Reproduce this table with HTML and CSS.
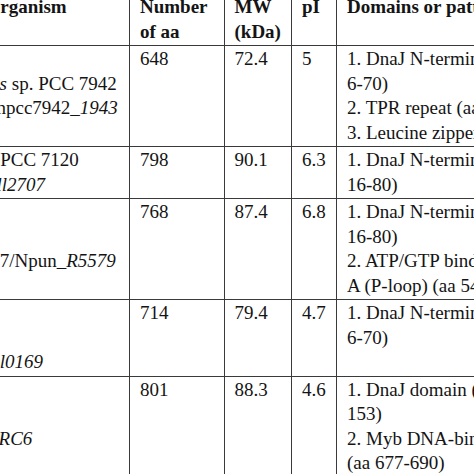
FILE: index.html
```html
<!DOCTYPE html>
<html lang="en">
<head>
<meta charset="utf-8">
<title>DnaJ-like proteins</title>
<link rel="stylesheet" href="styles.css">
</head>
<body>
<div class="frame">
<table class="tbl">
  <colgroup>
    <col class="c-org">
    <col class="c-num">
    <col class="c-mw">
    <col class="c-pi">
    <col class="c-dom">
  </colgroup>
  <thead>
    <tr>
      <th>Gene locus/Organism</th>
      <th>Number<br>of aa</th>
      <th>MW<br>(kDa)</th>
      <th>pI</th>
      <th>Domains or patterns</th>
    </tr>
  </thead>
  <tbody>
    <tr>
      <td class="org"><i>Synechococcus</i> sp. PCC 7942<br>Locus tag: Synpcc7942_<i>1943</i></td>
      <td>648</td>
      <td>72.4</td>
      <td>5</td>
      <td>1. DnaJ N-terminal domain (aa<br>6-70)<br>2. TPR repeat (aa 205-238)<br>3. Leucine zipper (aa 402-423)</td>
    </tr>
    <tr>
      <td class="org"><i>Anabaena</i> sp. PCC 7120<br>Gene locus: <i>all2707</i></td>
      <td>798</td>
      <td>90.1</td>
      <td>6.3</td>
      <td>1. DnaJ N-terminal domain (aa<br>16-80)</td>
    </tr>
    <tr>
      <td class="org"><i>Nostoc</i><br>Locus tag: Np7/Npun_<i>R5579</i></td>
      <td>768</td>
      <td>87.4</td>
      <td>6.8</td>
      <td>1. DnaJ N-terminal domain (aa<br>16-80)<br>2. ATP/GTP binding site motif<br>A (P-loop) (aa 540-547)</td>
    </tr>
    <tr>
      <td class="org"><i>Synechocystis</i><br>sp. PCC 6803<br>Gene locus: <i>sll0169</i></td>
      <td>714</td>
      <td>79.4</td>
      <td>4.7</td>
      <td>1. DnaJ N-terminal domain (aa<br>6-70)</td>
    </tr>
    <tr>
      <td class="org"><i>Arabidopsis</i><br>Gene locus: <i>ARC6</i></td>
      <td>801</td>
      <td>88.3</td>
      <td>4.6</td>
      <td>1. DnaJ domain (aa 89-<br>153)<br>2. Myb DNA-binding domain<br>(aa 677-690)</td>
    </tr>
  </tbody>
</table>
</div>
</body>
</html>
```

FILE: styles.css
```css
html, body {
  margin: 0;
  padding: 0;
  background: #ffffff;
}

body {
  width: 474px;
  height: 474px;
  overflow: hidden;
}

.frame {
  width: 474px;
  height: 474px;
  overflow: hidden;
}

.tbl {
  border-collapse: collapse;
  table-layout: fixed;
  width: 775px;
  margin-left: -119px;
  margin-top: -7px;
  font-family: "Liberation Serif", "Times New Roman", serif;
  font-size: 19px;
  line-height: 24.5px;
  color: #141414;
}

.c-org { width: 248px; }
.c-num { width: 94.5px; }
.c-mw { width: 67.5px; }
.c-pi { width: 45px; }
.c-dom { width: 320px; }

.tbl th,
.tbl td {
  border: 1.5px solid #3a3a3a;
  padding: 1px 6px 1px 10px;
  text-align: left;
  vertical-align: top;
  white-space: nowrap;
  overflow: hidden;
}

.tbl th {
  font-weight: bold;
}

.tbl td.org {
  vertical-align: middle;
}
```
